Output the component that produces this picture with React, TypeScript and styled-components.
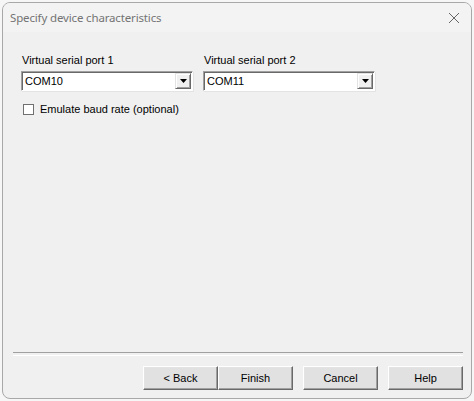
import React from "react";
import styled, { createGlobalStyle } from "styled-components";

const Global = createGlobalStyle`
  html, body { margin: 0; padding: 0; background: #f6f6f6; }
  body { width: 474px; height: 401px; overflow: hidden; }
`;

const Frame = styled.div`
  box-sizing: border-box;
  margin: 2px 0 0 2px;
  width: 470px;
  height: 397px;
  border: 1px solid #a8a8a8;
  border-radius: 8px;
  overflow: hidden;
  background: #f0f0f0;
  display: flex;
  flex-direction: column;
  font-family: "Liberation Sans", Arial, sans-serif;
`;

const TitleBar = styled.div`
  height: 29px;
  flex: none;
  background: #f3f3f3;
  display: flex;
  align-items: center;
  justify-content: space-between;
  padding: 0 9px 0 7px;
`;

const Title = styled.span`
  font-family: "Noto Sans", "Open Sans", sans-serif;
  font-size: 11.5px;
  color: #737373;
  letter-spacing: -0.15px;
`;

const Close = styled.svg`
  width: 12px;
  height: 12px;
  margin-right: 2px;
`;

const Body = styled.div`
  flex: 1;
  display: flex;
  flex-direction: column;
  padding: 21px 0 0 18px;
`;

const Row = styled.div`
  display: flex;
  gap: 10px;
`;

const Field = styled.div`
  display: flex;
  flex-direction: column;
  gap: 4px;
`;

const Label = styled.label`
  font-size: 11px;
  color: #000;
  padding-left: 1px;
  line-height: 14px;
`;

const Combo = styled.div`
  box-sizing: border-box;
  width: 172px;
  height: 20px;
  background: #fff;
  border-top: 1px solid #a0a0a0;
  border-left: 1px solid #a0a0a0;
  border-right: 1px solid #fff;
  border-bottom: 1px solid #fff;
  box-shadow: inset 1px 1px 0 #696969, 1px 1px 0 #e3e3e3;
  display: flex;
  align-items: center;
  padding: 1px 1px 1px 2px;
`;

const ComboText = styled.span`
  flex: 1;
  font-size: 11px;
  color: #000;
  padding-left: 1px;
`;

const DropBtn = styled.div`
  box-sizing: border-box;
  width: 16px;
  height: 16px;
  background: #f0f0f0;
  border-top: 1px solid #e3e3e3;
  border-left: 1px solid #e3e3e3;
  border-right: 1px solid #696969;
  border-bottom: 1px solid #696969;
  box-shadow: inset 1px 1px 0 #fff, inset -1px -1px 0 #a0a0a0;
  display: flex;
  align-items: center;
  justify-content: center;
`;

const CheckRow = styled.div`
  display: flex;
  align-items: center;
  gap: 6px;
  margin-top: 12px;
  margin-left: 2px;
`;

const Box = styled.div`
  box-sizing: border-box;
  width: 11px;
  height: 11px;
  background: #fff;
  border: 1px solid #707070;
`;

const CheckLabel = styled.span`
  font-size: 11px;
  color: #000;
`;

const Spacer = styled.div`
  flex: 1;
`;

const Separator = styled.div`
  height: 2px;
  margin: 0 8px 0 -8px;
  border-top: 1px solid #a0a0a0;
  border-bottom: 1px solid #fff;
`;

const Buttons = styled.div`
  display: flex;
  justify-content: flex-end;
  padding: 10px 8px 8px 0;
  margin-left: -18px;
`;

const Button = styled.button<{ $gap?: boolean }>`
  box-sizing: border-box;
  width: 75px;
  height: 24px;
  margin-left: ${(p) => (p.$gap ? "10px" : "0")};
  background: #e1e1e1;
  border-top: 1px solid #fff;
  border-left: 1px solid #fff;
  border-right: 1px solid #696969;
  border-bottom: 1px solid #696969;
  box-shadow: inset -1px -1px 0 #a0a0a0, inset 1px 1px 0 #e3e3e3;
  font-family: "Liberation Sans", Arial, sans-serif;
  font-size: 11px;
  color: #000;
  padding: 0;
  cursor: default;
`;

const Arrow = () => (
  <svg width="7" height="4" viewBox="0 0 7 4">
    <path d="M0 0h7L3.5 4z" fill="#000" />
  </svg>
);

const ComboBox = ({ value }: { value: string }) => (
  <Combo>
    <ComboText>{value}</ComboText>
    <DropBtn>
      <Arrow />
    </DropBtn>
  </Combo>
);

export default function App() {
  return (
    <>
      <Global />
      <Frame>
        <TitleBar>
          <Title>Specify device characteristics</Title>
          <Close viewBox="0 0 12 12">
            <path d="M1 1L11 11M11 1L1 11" stroke="#666" strokeWidth="1" />
          </Close>
        </TitleBar>
        <Body>
          <Row>
            <Field>
              <Label>Virtual serial port 1</Label>
              <ComboBox value="COM10" />
            </Field>
            <Field>
              <Label>Virtual serial port 2</Label>
              <ComboBox value="COM11" />
            </Field>
          </Row>
          <CheckRow>
            <Box />
            <CheckLabel>Emulate baud rate (optional)</CheckLabel>
          </CheckRow>
          <Spacer />
          <Separator />
          <Buttons>
            <Button>&lt; Back</Button>
            <Button>Finish</Button>
            <Button $gap>Cancel</Button>
            <Button $gap>Help</Button>
          </Buttons>
        </Body>
      </Frame>
    </>
  );
}
